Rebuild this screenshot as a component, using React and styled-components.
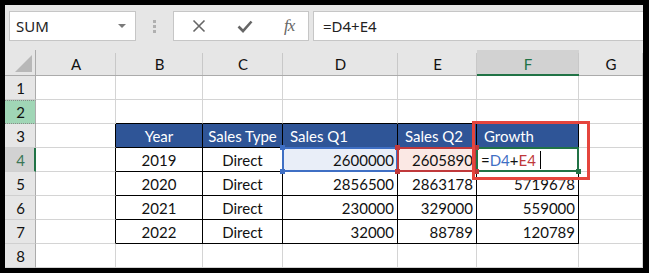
import React from 'react';
import styled, { createGlobalStyle } from 'styled-components';

const GlobalStyle = createGlobalStyle`
  html, body {
    margin: 0;
    padding: 0;
    background: #000;
  }
  * {
    box-sizing: border-box;
  }
`;

const Frame = styled.div`
  width: 649px;
  height: 273px;
  padding: 5px 6px 5px 5px;
  background: #000;
`;

const Window = styled.div`
  height: 100%;
  background: #fff;
  display: flex;
  flex-direction: column;
  overflow: hidden;
  font-family: "Lato", "Open Sans", sans-serif;
`;

const FormulaBar = styled.div`
  height: 45px;
  flex: none;
  background: #e6e6e6;
  display: flex;
  align-items: flex-start;
  padding: 6px 0 0 4px;
`;

const NameBox = styled.div`
  width: 127px;
  height: 30px;
  background: #fff;
  border: 1px solid #c6c6c6;
  display: flex;
  align-items: center;
  justify-content: space-between;
  padding: 0 9px 0 6px;
  font-family: "Noto Sans", "Open Sans", sans-serif;
  font-size: 15px;
  color: #222;
`;

const DropArrow = styled.span`
  width: 0;
  height: 0;
  border-left: 4px solid transparent;
  border-right: 4px solid transparent;
  border-top: 4px solid #7a7a7a;
`;

const Grip = styled.div`
  width: 37px;
  height: 30px;
  display: flex;
  flex-direction: column;
  align-items: center;
  justify-content: center;
  gap: 2px;
`;

const GripDot = styled.span`
  width: 3px;
  height: 3px;
  background: #b0b0b0;
`;

const FunctionBox = styled.div`
  width: 136px;
  height: 30px;
  background: #fff;
  border: 1px solid #c6c6c6;
  display: flex;
  align-items: center;
  padding-left: 17px;
  gap: 30px;
`;

const IconSlot = styled.span`
  width: 16px;
  height: 16px;
  display: flex;
  align-items: center;
  justify-content: center;
`;

const Fx = styled.span`
  font-family: "Liberation Serif", "DejaVu Serif", serif;
  font-style: italic;
  font-size: 17px;
  color: #666;
  letter-spacing: -1px;
  margin-left: 1px;
`;

const FormulaInput = styled.div`
  flex: 1;
  height: 30px;
  margin-left: 4px;
  background: #fff;
  border: 1px solid #c6c6c6;
  border-right: none;
  display: flex;
  align-items: center;
  padding-left: 9px;
  font-family: "Noto Sans", "Open Sans", sans-serif;
  font-size: 15px;
  color: #222;
`;

const Sheet = styled.div`
  display: grid;
  grid-template-columns: 31px 80px 87px 80px 115px 79px 102px 64px;
  grid-template-rows: 26px repeat(8, 24px);
  font-size: 15px;
  color: #111;
`;

const Corner = styled.div`
  background: #e6e6e6;
  border-right: 1px solid #ababab;
  border-bottom: 1px solid #ababab;
  display: flex;
  align-items: flex-end;
  justify-content: flex-end;
  padding: 0 3px 3px 0;
`;

const CornerTriangle = styled.span`
  width: 0;
  height: 0;
  border-left: 17px solid transparent;
  border-bottom: 17px solid #b8b8b8;
`;

const ColHead = styled.div`
  background: ${(p) => (p.$active ? '#d2d2d2' : '#e6e6e6')};
  border-bottom: ${(p) => (p.$active ? '2px solid #217346' : '1px solid #ababab')};
  color: ${(p) => (p.$active ? '#217346' : '#111')};
  display: flex;
  align-items: center;
  justify-content: center;
  padding-top: 3px;
  position: relative;
  &::after {
    content: '';
    position: absolute;
    right: 0;
    top: 3px;
    bottom: 0;
    width: 1px;
    background: #c8c8c8;
  }
`;

const rowHeadBg = {
  normal: '#e6e6e6',
  active: '#d2d2d2',
  marked: '#a0d6b6',
};

const RowHead = styled.div`
  background: ${(p) => rowHeadBg[p.$state]};
  border-right: ${(p) => (p.$state === 'active' ? '2px solid #217346' : '1px solid #ababab')};
  border-bottom: ${(p) => (p.$state === 'marked' ? '1px dotted #8a8a8a' : '1px solid #d0d0d0')};
  border-top: ${(p) => (p.$state === 'marked' ? '1px dotted #8a8a8a' : 'none')};
  color: ${(p) => (p.$state === 'active' ? '#3a7656' : '#111')};
  display: flex;
  align-items: center;
  justify-content: center;
  padding-left: ${(p) => (p.$state === 'active' ? '2px' : '1px')};
`;

const selColors = {
  blue: { line: '#3f6fc4', fill: '#e9eef8' },
  red: { line: '#c0393b', fill: '#fbe8e4' },
  green: { line: '#217346', fill: '#fff' },
};

const Cell = styled.div`
  position: relative;
  background: ${(p) => (p.$head ? '#2f5597' : p.$sel ? selColors[p.$sel].fill : '#fff')};
  color: ${(p) => (p.$head ? '#fff' : '#111')};
  border-right: 1px solid ${(p) => (p.$rb ? '#000' : '#d4d4d4')};
  border-bottom: 1px solid ${(p) => (p.$bb ? '#000' : '#d4d4d4')};
  display: flex;
  align-items: center;
  justify-content: ${(p) => ({ left: 'flex-start', center: 'center', right: 'flex-end' })[p.$align || 'left']};
  padding: 1px ${(p) => (p.$align === 'right' ? '3px' : '0')} 0 ${(p) => (p.$align === 'left' ? (p.$head ? '7px' : '4px') : '0')};
  white-space: nowrap;
  ${(p) =>
    p.$sel &&
    `
    &::after {
      content: '';
      position: absolute;
      left: -1px;
      top: -1px;
      right: -1px;
      bottom: -1px;
      border: 2px solid ${selColors[p.$sel].line};
      z-index: 2;
      pointer-events: none;
    }
  `}
`;

const Handle = styled.span`
  position: absolute;
  width: 5px;
  height: 5px;
  background: ${(p) => selColors[p.$color].line};
  ${(p) => (p.$v === 'top' ? 'top: -3px;' : 'bottom: -3px;')}
  ${(p) => (p.$h === 'left' ? 'left: -3px;' : 'right: -3px;')}
  z-index: 3;
`;

const RefText = styled.span`
  color: ${(p) => p.$color};
`;

const Caret = styled.span`
  display: inline-block;
  width: 1px;
  height: 18px;
  background: #000;
  margin-left: 4px;
`;

const Annotation = styled.span`
  position: absolute;
  left: -5px;
  top: -3px;
  width: 118px;
  height: 59px;
  border: 3px solid #e5453d;
  z-index: 10;
  pointer-events: none;
`;

const columns = ['A', 'B', 'C', 'D', 'E', 'F', 'G'];

const tableHead = [
  { text: 'Year', align: 'center' },
  { text: 'Sales Type', align: 'center' },
  { text: 'Sales Q1', align: 'left' },
  { text: 'Sales Q2', align: 'left' },
  { text: 'Growth', align: 'left' },
];

const tableRows = [
  ['2019', 'Direct', '2600000', '2605890', null],
  ['2020', 'Direct', '2856500', '2863178', '5719678'],
  ['2021', 'Direct', '230000', '329000', '559000'],
  ['2022', 'Direct', '32000', '88789', '120789'],
];

const bodyAlign = ['center', 'center', 'right', 'right', 'right'];

function Corners({ color }) {
  return (
    <>
      <Handle $color={color} $v="top" $h="left" />
      <Handle $color={color} $v="top" $h="right" />
      <Handle $color={color} $v="bottom" $h="left" />
      <Handle $color={color} $v="bottom" $h="right" />
    </>
  );
}

function FormulaCell() {
  return (
    <>
      <span>=</span>
      <RefText $color="#3f6fc4">D4</RefText>
      <span>+</span>
      <RefText $color="#c0393b">E4</RefText>
      <Caret />
      <Handle $color="green" $v="bottom" $h="right" />
    </>
  );
}

function renderRow(row) {
  const cells = [];
  columns.forEach((col, ci) => {
    const inTable = row >= 3 && row <= 7 && ci >= 1 && ci <= 5;
    const rb = row >= 3 && row <= 7 && ci <= 5;
    const bb = row >= 2 && row <= 7 && ci >= 1 && ci <= 5;
    const key = `${col}${row}`;

    if (!inTable) {
      cells.push(<Cell key={key} $rb={rb} $bb={bb} />);
      return;
    }

    const ti = ci - 1;
    if (row === 3) {
      cells.push(
        <Cell key={key} $head $rb $bb $align={tableHead[ti].align}>
          {tableHead[ti].text}
          {ti === 4 && <Annotation />}
        </Cell>,
      );
      return;
    }

    const value = tableRows[row - 4][ti];
    let sel;
    if (row === 4 && ti === 2) sel = 'blue';
    if (row === 4 && ti === 3) sel = 'red';
    if (row === 4 && ti === 4) sel = 'green';

    cells.push(
      <Cell key={key} $rb $bb $sel={sel} $align={sel === 'green' ? 'left' : bodyAlign[ti]}>
        {sel === 'green' ? <FormulaCell /> : value}
        {(sel === 'blue' || sel === 'red') && <Corners color={sel} />}
      </Cell>,
    );
  });
  return cells;
}

function rowState(row) {
  if (row === 2) return 'marked';
  if (row === 4) return 'active';
  return 'normal';
}

export default function App() {
  const rows = [1, 2, 3, 4, 5, 6, 7, 8];
  return (
    <>
      <GlobalStyle />
      <Frame>
        <Window>
          <FormulaBar>
            <NameBox>
              SUM
              <DropArrow />
            </NameBox>
            <Grip>
              <GripDot />
              <GripDot />
              <GripDot />
            </Grip>
            <FunctionBox>
              <IconSlot>
                <svg width="14" height="14" viewBox="0 0 14 14">
                  <path d="M1.5 1.5 L12.5 12.5 M12.5 1.5 L1.5 12.5" stroke="#666" strokeWidth="1.6" fill="none" />
                </svg>
              </IconSlot>
              <IconSlot>
                <svg width="16" height="14" viewBox="0 0 16 14">
                  <path d="M1.5 7.5 L6 12 L14.5 2.5" stroke="#666" strokeWidth="2.6" fill="none" strokeLinejoin="miter" />
                </svg>
              </IconSlot>
              <Fx>fx</Fx>
            </FunctionBox>
            <FormulaInput>=D4+E4</FormulaInput>
          </FormulaBar>
          <Sheet>
            <Corner>
              <CornerTriangle />
            </Corner>
            {columns.map((col) => (
              <ColHead key={col} $active={col === 'F'}>
                {col}
              </ColHead>
            ))}
            {rows.map((row) => (
              <React.Fragment key={row}>
                <RowHead $state={rowState(row)}>{row}</RowHead>
                {renderRow(row)}
              </React.Fragment>
            ))}
          </Sheet>
        </Window>
      </Frame>
    </>
  );
}
